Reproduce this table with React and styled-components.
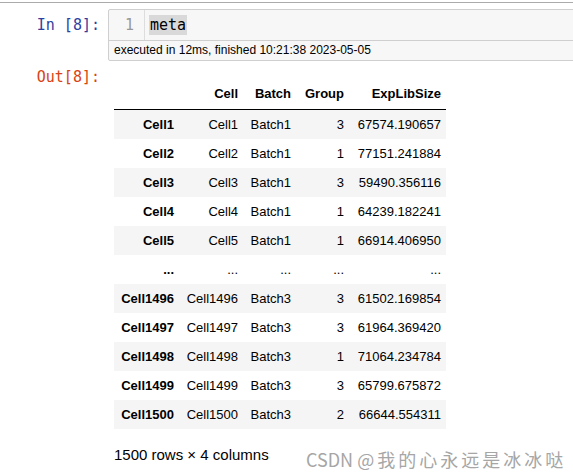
import React from 'react';
import styled, { createGlobalStyle } from 'styled-components';

const rows = [
  ['Cell1', 'Cell1', 'Batch1', '3', '67574.190657'],
  ['Cell2', 'Cell2', 'Batch1', '1', '77151.241884'],
  ['Cell3', 'Cell3', 'Batch1', '3', '59490.356116'],
  ['Cell4', 'Cell4', 'Batch1', '1', '64239.182241'],
  ['Cell5', 'Cell5', 'Batch1', '1', '66914.406950'],
  ['...', '...', '...', '...', '...'],
  ['Cell1496', 'Cell1496', 'Batch3', '3', '61502.169854'],
  ['Cell1497', 'Cell1497', 'Batch3', '3', '61964.369420'],
  ['Cell1498', 'Cell1498', 'Batch3', '1', '71064.234784'],
  ['Cell1499', 'Cell1499', 'Batch3', '3', '65799.675872'],
  ['Cell1500', 'Cell1500', 'Batch3', '2', '66644.554311'],
];

const columns = ['Cell', 'Batch', 'Group', 'ExpLibSize'];
const colWidths = [65, 64, 53, 53, 97];

export default function App() {
  return (
    <Page>
      <GlobalStyle />
      <TopRule />
      <InputRow>
        <Prompt kind="in">In [8]:</Prompt>
        <InputBox>
          <CodeLine>
            <Gutter>1</Gutter>
            <Code>
              <Match>meta</Match>
            </Code>
          </CodeLine>
          <Timing>executed in 12ms, finished 10:21:38 2023-05-05</Timing>
        </InputBox>
      </InputRow>
      <OutputRow>
        <Prompt kind="out">Out[8]:</Prompt>
        <OutputArea>
          <Frame>
            <colgroup>
              {colWidths.map((w, i) => (
                <col key={i} style={{ width: w }} />
              ))}
            </colgroup>
            <thead>
              <tr>
                <HeadCell />
                {columns.map(c => (
                  <HeadCell key={c}>{c}</HeadCell>
                ))}
              </tr>
            </thead>
            <tbody>
              {rows.map((r, i) => (
                <Row key={i} striped={i % 2 === 0}>
                  <IndexCell>{r[0]}</IndexCell>
                  {r.slice(1).map((v, j) => (
                    <Cell key={j}>{v}</Cell>
                  ))}
                </Row>
              ))}
            </tbody>
          </Frame>
          <Shape>1500 rows × 4 columns</Shape>
        </OutputArea>
      </OutputRow>
      <Watermark>
        CSDN @<Han>我的心永远是冰冰哒</Han>
      </Watermark>
    </Page>
  );
}

const GlobalStyle = createGlobalStyle`
  html, body {
    margin: 0;
    background: #fff;
    overflow: hidden;
  }
`;

const Page = styled.div`
  position: relative;
  min-height: 476px;
  font-family: 'Liberation Sans', Arial, sans-serif;
  color: #000;
`;

const TopRule = styled.div`
  height: 1px;
  margin-top: 2px;
  background: #ababab;
`;

const InputRow = styled.div`
  display: flex;
  margin-top: 6px;
`;

const Prompt = styled.div`
  flex: 0 0 108px;
  box-sizing: border-box;
  padding-right: 8px;
  padding-top: ${p => (p.kind === 'in' ? '1px' : '1px')};
  text-align: right;
  font-family: 'DejaVu Sans Mono', monospace;
  font-size: 15px;
  line-height: ${p => (p.kind === 'in' ? '30px' : '20px')};
  color: ${p => (p.kind === 'in' ? '#303f9f' : '#d84315')};
`;

const InputBox = styled.div`
  flex: 1;
  margin-right: -10px;
  border: 1px solid #cfcfcf;
  border-radius: 2px;
  background: #f7f7f7;
`;

const CodeLine = styled.div`
  display: flex;
  height: 30px;
  align-items: center;
  font-family: 'DejaVu Sans Mono', monospace;
  font-size: 15px;
`;

const Gutter = styled.div`
  width: 36px;
  height: 30px;
  box-sizing: border-box;
  padding-right: 10px;
  border-right: 1px solid #dddddd;
  text-align: right;
  line-height: 30px;
  color: #999;
`;

const Code = styled.div`
  padding-left: 4px;
  line-height: 30px;
`;

const Match = styled.span`
  display: inline-block;
  line-height: 20px;
  padding: 0 1px;
  background: #d9d9d9;
`;

const Timing = styled.div`
  height: 19px;
  border-top: 1px solid #cfcfcf;
  padding-left: 5px;
  font-size: 12px;
  line-height: 19px;
`;

const OutputRow = styled.div`
  display: flex;
  margin-top: 5px;
`;

const OutputArea = styled.div`
  padding-left: 6px;
  padding-top: 12px;
`;

const Frame = styled.table`
  border-collapse: separate;
  border-spacing: 0;
  table-layout: fixed;
  font-size: 13px;
`;

const HeadCell = styled.th`
  height: 31px;
  padding: 0 5px;
  border-bottom: 1px solid #000;
  text-align: right;
  font-weight: bold;
  vertical-align: middle;
`;

const Row = styled.tr`
  height: 29px;
  background: ${p => (p.striped ? '#f5f5f5' : '#fff')};
`;

const Cell = styled.td`
  padding: 0 5px 1px;
  text-align: right;
  white-space: nowrap;
  vertical-align: middle;
`;

const IndexCell = styled(Cell).attrs({ as: 'th' })`
  font-weight: bold;
`;

const Shape = styled.div`
  margin-top: 17px;
  font-size: 15px;
  line-height: 18px;
`;

const Watermark = styled.div`
  position: absolute;
  left: 306px;
  top: 446px;
  font-family: 'Noto Sans CJK SC', sans-serif;
  font-size: 18px;
  line-height: 22px;
  color: #a6a6a6;
  text-shadow: 1px 1px 0 #fff;
  white-space: nowrap;
`;

const Han = styled.span`
  margin-left: 3px;
  letter-spacing: 3px;
`;
